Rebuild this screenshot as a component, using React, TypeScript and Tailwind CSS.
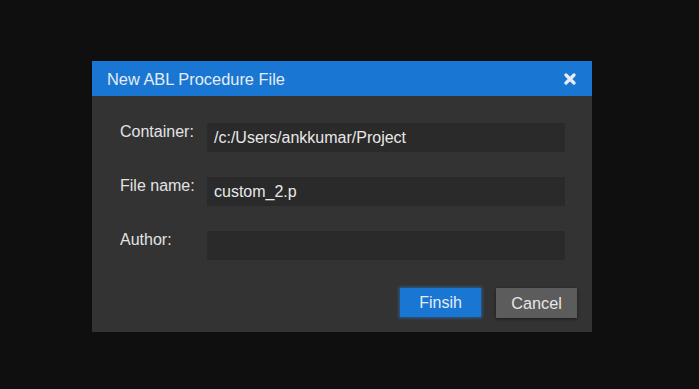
export default function App() {
  return (
    <div className="w-[699px] h-[389px] bg-[#0f0f0f] pt-[61px] pl-[92px] font-['Liberation_Sans',Arial,sans-serif] text-[16px]">
      <div className="w-[500px] h-[271px] bg-[#333333] flex flex-col">
        {/* Header */}
        <div className="h-[35px] bg-[#1976d2] flex items-center justify-between pl-[15px] pr-[16px]">
          <span className="text-[#e6ecf2] text-[16.4px] leading-[18px]">New ABL Procedure File</span>
          <svg width="12" height="12" viewBox="0 0 12 12" className="text-[#e8edf3]">
            <path d="M2 2 L10 10 M10 2 L2 10" stroke="currentColor" strokeWidth="3.2" strokeLinecap="round" />
          </svg>
        </div>

        {/* Body */}
        <div className="flex flex-col gap-[25px] pt-[27px] pl-[28px] pr-[27px]">
          <Field label="Container:" value="/c:/Users/ankkumar/Project" />
          <Field label="File name:" value="custom_2.p" />
          <Field label="Author:" value="" />
        </div>

        {/* Footer */}
        <div className="flex justify-end gap-[15px] pr-[15px] mt-[28px]">
          <button className="w-[81px] h-[29px] bg-[#1976d2] text-[#e6ecf2] leading-[18px] shadow-[0_0_3px_1px_rgba(40,130,230,0.55)]">
            Finsih
          </button>
          <button className="w-[81px] h-[30px] bg-[#5c5c5c] text-[#e6e6e6] text-[16.3px] leading-[18px] shadow-[0_1px_3px_rgba(0,0,0,0.5)]">
            Cancel
          </button>
        </div>
      </div>
    </div>
  );
}

function Field({ label, value }: { label: string; value: string }) {
  return (
    <div className="flex items-start">
      <label className="w-[87px] leading-[18px] text-[#e3e3e3]">{label}</label>
      <div className="flex-1 h-[29px] bg-[#2a2a2a] flex items-center pl-[7px] text-[#e8e8e8] leading-[18px]">
        {value}
      </div>
    </div>
  );
}
